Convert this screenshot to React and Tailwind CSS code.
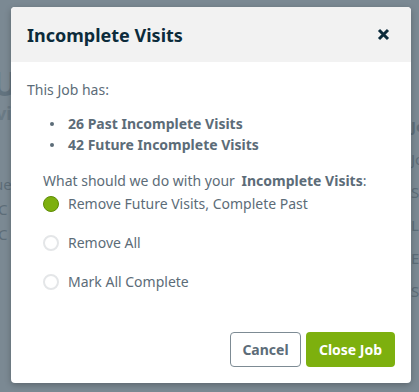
import React, { useState } from "react";

const options = [
  "Remove Future Visits, Complete Past",
  "Remove All",
  "Mark All Complete",
];

const rightCol = ["S", "L", "E", "S"];

function Radio({ checked }) {
  return checked ? (
    <span className="w-[16px] h-[16px] rounded-full bg-[#7db00e] border border-[#5f8c06] shrink-0" />
  ) : (
    <span className="w-[16px] h-[16px] rounded-full bg-white border-2 border-[#e4e6e8] shrink-0" />
  );
}

function Bullet({ children }) {
  return (
    <li className="flex items-center gap-[14px]">
      <span className="w-[4px] h-[4px] rounded-full bg-[#5c6c78]" />
      {children}
    </li>
  );
}

export default function App() {
  const [choice, setChoice] = useState(0);

  return (
    <div
      className="relative w-[419px] h-[392px] overflow-hidden bg-[#7b8993]"
      style={{ fontFamily: '"Noto Sans", "Open Sans", sans-serif' }}
    >
      {/* page behind the overlay */}
      <div className="h-full flex justify-between text-[15px] text-[#5d6d78] select-none">
        <div className="flex flex-col ml-[-8px] pt-[66px] leading-[25px]">
          <span className="text-[34px] leading-[34px] font-bold text-[#62737f]">U</span>
          <span className="text-[18px] leading-[26px] font-bold pl-[4px] text-[#6a7a85]">vi</span>
          <span className="mt-[46px] pl-[2px]">ue</span>
          <span className="pl-[6px]">C</span>
          <span className="pl-[6px]">C</span>
        </div>
        <div className="flex flex-col pt-[110px] mr-[-12px] w-[20px] leading-[33px]">
          <span className="font-bold">Jo</span>
          <span>Jo</span>
          {rightCol.map((c, i) => (
            <span key={i}>{c}</span>
          ))}
        </div>
      </div>

      {/* modal */}
      <div className="absolute left-[11px] top-[7px] w-[400px] h-[376px] bg-white rounded-[4px] overflow-hidden shadow-[0_2px_6px_rgba(0,0,0,0.25)] flex flex-col">
        <div className="h-[55px] bg-[#f2f2f2] flex items-center justify-between pl-[16px] pr-[21px]">
          <h2 className="text-[18px] font-bold text-[#0c2b3b] mt-[1px]">Incomplete Visits</h2>
          <svg width="13" height="13" viewBox="0 0 13 13">
            <path d="M2 2 L11 11 M11 2 L2 11" stroke="#0c2b3b" strokeWidth="3" />
          </svg>
        </div>

        <div className="flex-1 px-[16px] pt-[17px] text-[14px] text-[#5c6c78] leading-[21px]">
          <p>This Job has:</p>
          <ul className="mt-[13px] pl-[23px] font-bold">
            <Bullet>26 Past Incomplete Visits</Bullet>
            <Bullet>42 Future Incomplete Visits</Bullet>
          </ul>

          <div className="pl-[16px] pt-[15px]">
            <p>
              What should we do with your <span className="font-bold ml-[3px]">Incomplete Visits</span>:
            </p>
            <div className="flex flex-col gap-[18px] pt-[2px]">
              {options.map((o, i) => (
                <label
                  key={o}
                  className="flex items-center gap-[9px] cursor-pointer"
                  onClick={() => setChoice(i)}
                >
                  <Radio checked={choice === i} />
                  <span>{o}</span>
                </label>
              ))}
            </div>
          </div>
        </div>

        <div className="flex justify-end gap-[5px] px-[16px] pb-[16px]">
          <button className="h-[35px] w-[71px] rounded-[4px] border border-[#7d8b94] bg-white text-[14px] font-bold text-[#5c6c78]">
            Cancel
          </button>
          <button className="h-[35px] w-[89px] rounded-[4px] bg-[#7db00e] text-[14px] font-bold text-white">
            Close Job
          </button>
        </div>
      </div>
    </div>
  );
}
